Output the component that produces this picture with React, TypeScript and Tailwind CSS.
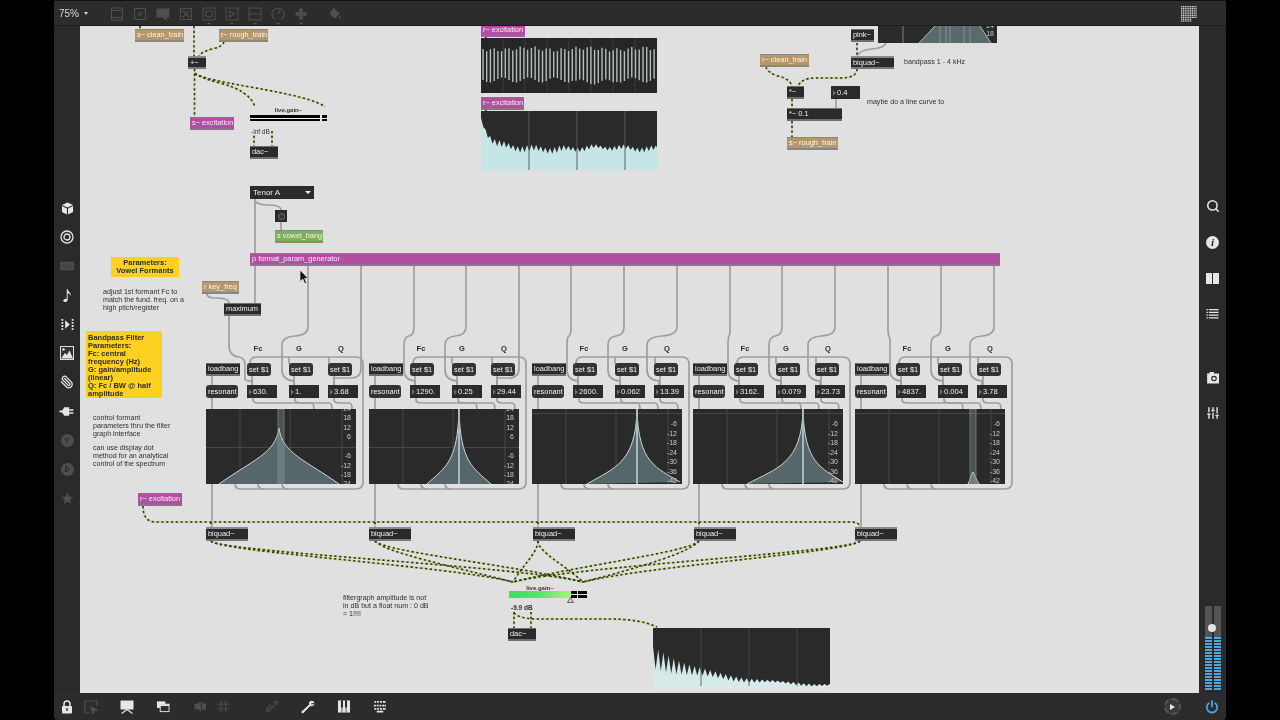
import { Paperclip, Search, SlidersVertical } from 'lucide-react'

const font = "font-['Liberation_Sans',Arial,sans-serif]"

// everything on the patcher is noted in page coordinates, the canvas starts at 80,26
function at(x: number, y: number, w?: number, h?: number) {
  return { left: x - 80, top: y - 26, width: w, height: h }
}

type Kind = 'obj' | 'tan' | 'mag' | 'grn' | 'msg' | 'sig'

const boxClass: Record<Kind, string> = {
  obj: 'bg-[#2a2a2a] border-t border-b-2 border-[#6f6f6f] text-[#f2f2f2]',
  sig: 'bg-[#2a2a2a] border-t-2 border-b-2 border-t-[#8a8a8a] border-b-[#787878] text-[#f2f2f2]',
  tan: 'bg-[#b8966b] border-t border-b-2 border-[#8e8678] text-[#fff6e6]',
  mag: 'bg-[#b24fa2] border-t border-b-2 border-[#8f6d8b] text-[#fdeafa]',
  grn: 'bg-[#7fae5c] border-t border-b-2 border-[#7f9270] text-[#eef7e6]',
  msg: 'bg-[#333333] rounded-[3px] text-[#f2f2f2]',
}

function Box({ x, y, w, h = 13, label, kind = 'obj' }: { x: number; y: number; w: number; h?: number; label: string; kind?: Kind }) {
  return (
    <div style={at(x, y, w, h)} className={'absolute flex items-center whitespace-nowrap pl-[2px] text-[7.4px] leading-none ' + boxClass[kind]}>
      {label}
    </div>
  )
}

function Num({ x, y, value, w = 30 }: { x: number; y: number; value: string; w?: number }) {
  return (
    <div style={at(x, y, w, 13)} className="absolute flex items-center gap-[1px] bg-[#2b2b2b] pl-[2px] text-[7.6px] leading-none text-[#eeeeee]">
      <span className="h-0 w-0 border-y-[3px] border-l-[3px] border-y-transparent border-l-[#6d6d6d]" />
      {value}
    </div>
  )
}

function Note({ x, y, w, lines, bold }: { x: number; y: number; w: number; lines: string[]; bold?: boolean }) {
  return (
    <div style={at(x, y, w)} className={'absolute whitespace-nowrap text-[7.1px] leading-[8px] text-[#2f2f2f] ' + (bold ? 'font-bold' : '')}>
      {lines.map(function(l, i) {
        return <div key={i} className="h-[8px]">{l}</div>
      })}
    </div>
  )
}

const posScale: [string, number][] = [['24', 2], ['18', 11], ['12', 20.5], ['6', 30], ['-6', 49], ['-12', 58.5], ['-18', 68], ['-24', 76.5]]
const negScale: [string, number][] = [['-6', 17], ['-12', 26.5], ['-18', 36], ['-24', 45.5], ['-30', 55], ['-36', 64.5], ['-42', 74]]

type Group = {
  g: number
  vals: string[]
  p: number
  py: number
  l: number
  r: number
  spike: boolean
  pos: boolean
  band?: [number, number]
}

const groups: Group[] = [
  { g: 206, vals: ['630.', '1.', '3.68'], p: 73, py: 19, l: 13, r: 133, spike: false, pos: true, band: [72, 78] },
  { g: 369, vals: ['1290.', '0.25', '29.44'], p: 90, py: 1, l: 58, r: 122, spike: true, pos: true },
  { g: 532, vals: ['2600.', '0.062', '13.39'], p: 105, py: 1, l: 55, r: 148, spike: true, pos: false },
  { g: 693, vals: ['3162.', '0.079', '23.73'], p: 110, py: 1, l: 54, r: 150, spike: true, pos: false },
  { g: 855, vals: ['4837.', '0.004', '3.78'], p: 118, py: 63, l: 113, r: 124, spike: false, pos: false, band: [115, 121] },
]

function curve(g: Group) {
  const a = g.spike ? 0.22 : 0.42
  const b = g.spike ? 0.72 : 0.45
  const d = 75 - g.py
  const inn = g.spike ? 1.5 : 3
  const endY = g.r > 145 ? 73 : 75
  return (
    `M${g.l} 75 C${g.l + (g.p - g.l) * 0.55} ${75 - d * a} ${g.p - inn} ${g.py + d * b} ${g.p} ${g.py} ` +
    `C${g.p + inn} ${g.py + d * b} ${g.r - (g.r - g.p) * 0.55} ${75 - d * a} ${g.r} ${endY}`
  )
}

function FilterGraph({ group }: { group: Group }) {
  const scale = group.pos ? posScale : negScale
  const d = curve(group)
  return (
    <svg style={at(group.g, 409, 150, 75)} viewBox="0 0 150 75" className="absolute bg-[#2a2a2a]">
      <g stroke="#464646" strokeWidth="1">
        <path d="M34 0V75M84 0V75M136 0V75" />
        <path d={group.pos ? 'M0 38.5H150' : 'M0 4.5H150'} />
      </g>
      <path d={d + ' Z'} fill="#57666a" />
      <path d={d} fill="none" stroke="#ccd8d6" strokeWidth="1" />
      {group.band ? (
        <rect x={group.band[0]} y="0" width={group.band[1] - group.band[0]} height="75" fill="#9db0b0" fillOpacity="0.3" stroke="#7e8c8c" strokeWidth="0.7" />
      ) : (
        <rect x={group.p - 1} y="0" width="2" height="75" fill="#a6bbbb" />
      )}
      {scale.map(function(s) {
        return (
          <text key={s[0]} x="145" y={s[1]} textAnchor="end" fontSize="7" fill="#c9c9c9">{s[0]}</text>
        )
      })}
    </svg>
  )
}

function Waveform() {
  let d = ''
  for (let i = 0; i < 47; i++) {
    const x = 2 + i * 3.72
    const top = 11 + 1.8 * Math.sin(i * 1.7) + Math.sin(i * 0.4)
    const bot = 42 + 2.5 * Math.sin(i * 0.9) + (i > 24 && i < 36 ? 2 : 0)
    d += `M${x.toFixed(1)} ${top.toFixed(1)}V${bot.toFixed(1)}`
  }
  return (
    <svg style={at(481, 38, 176, 55)} viewBox="0 0 176 55" className="absolute bg-[#262626]">
      <path d="M22 0V55M44 0V55M66 0V55M88 0V55M110 0V55M132 0V55M154 0V55" stroke="#3c3c3c" strokeWidth="1" />
      <path d={d} stroke="#b2c0bd" strokeWidth="1.4" fill="none" />
    </svg>
  )
}

function spectrum(w: number, h: number, period: number, top: (x: number) => number, depth: (x: number) => number) {
  let d = `M0 ${h}L0 ${top(0).toFixed(1)}`
  for (let x = 0; x < w; x += period) {
    const j = Math.sin(x * 1.3) * 1.2
    d += `L${(x + period * 0.5).toFixed(1)} ${(top(x) + depth(x) + j).toFixed(1)}L${(x + period).toFixed(1)} ${(top(x + period) + j * 0.5).toFixed(1)}`
  }
  return d + `L${w} ${h}Z`
}

function SpectrumTop() {
  const d = spectrum(176, 59, 4.6, function(x) { return 35 - 28 * Math.exp(-x / 10) + 1.5 * Math.sin(x * 0.21) }, function(x) { return 4 + 5 * Math.exp(-x / 50) })
  return (
    <svg style={at(481, 111, 176, 59)} viewBox="0 0 176 59" className="absolute bg-[#2a2a2a]">
      <path d={d} fill="#c6e5e6" />
      <path d="M48 0V59M96 0V59M144 0V59" stroke="#5b5f5f" strokeWidth="1" />
    </svg>
  )
}

function SpectrumBottom() {
  const d = spectrum(177, 62, 5.2, function(x) { return 58 - 40 * Math.exp(-x / 60) }, function(x) { return 22 * Math.exp(-x / 45) + 1.5 })
  return (
    <svg style={at(653, 628, 177, 62)} viewBox="0 0 177 62" className="absolute">
      <defs>
        <linearGradient id="tail" x1="0" y1="0" x2="0" y2="1">
          <stop offset="0.3" stopColor="#cde4e5" />
          <stop offset="0.85" stopColor="#d6ebeb" />
          <stop offset="1" stopColor="#e0e4e4" />
        </linearGradient>
      </defs>
      <rect width="177" height="58.5" fill="#2a2a2a" />
      <path d={d} fill="url(#tail)" />
      <path d="M48 0V58M96 0V58M144 0V58" stroke="#4d4d4d" strokeWidth="0.8" />
    </svg>
  )
}

function cornerGraph() {
  return (
    <svg style={at(878, 26, 119, 17)} viewBox="0 0 119 17" className="absolute bg-[#2a2a2a]">
      <path d="M41 17L57 0H102L113 17Z" fill="#5a6a6a" />
      <path d="M41 17L57 0M102 0L113 17" stroke="#ccd8d6" strokeWidth="0.8" fill="none" />
      <path d="M25 0V17M62 0V17M68 0V17M72 0V17M86 0V17M92 0V17" stroke="#8b9a9a" strokeWidth="0.8" />
      <text x="116" y="10" textAnchor="end" fontSize="7" fill="#c9c9c9">18</text>
      <text x="116" y="2" textAnchor="end" fontSize="7" fill="#c9c9c9">24</text>
    </svg>
  )
}

function route(s: number, v: number, end: number) {
  return `M${s} 266V327Q${s} 335 ${(s + v) / 2} 336Q${v} 337 ${v} 345V370Q${v} 380 ${end} 381V385`
}

function groupCords(g: number, i: number) {
  const list: string[] = []
  // outlets of the poly subpatcher
  const src = [[255, 308, 361], [414, 466, 519], [571, 624, 677], [730, 782, 835], [888, 941, 994]][i]
  if (i === 0) {
    list.push('M229 316V345Q229 356 239 357Q245 358 245 365V379Q245 381 252 381V385')
  } else {
    list.push(route(src[0], g + 35, g + 46))
  }
  list.push(route(src[1], g + 76, g + 88))
  if (i < 2) {
    list.push(`M${src[2]} 266V368Q${src[2]} 378 ${src[2] - 10} 378H${g + 128}V385`)
  } else {
    list.push(route(src[2], g + 115, g + 127))
  }
  // filtergraph back up to the set messages
  const right = g + 157
  list.push(`M${g + 29} 484Q${g + 29} 489 ${g + 35} 489H${right - 7}Q${right} 489 ${right} 482V364Q${right} 357 ${right - 7} 357H${g + 50}Q${g + 44} 357 ${g + 44} 364`)
  list.push(`M${g + 52} 484Q${g + 52} 489 ${g + 58} 489`)
  list.push(`M${g + 76} 484Q${g + 76} 489 ${g + 82} 489`)
  list.push(`M${g + 83} 357V364M${g + 123} 357V364`)
  // set -> number, number -> filtergraph
  list.push(`M${g + 46} 376V385M${g + 88} 376V385M${g + 128} 376V385`)
  list.push(`M${g + 47} 398V400Q${g + 47} 403 ${g + 53} 403H${g + 105}Q${g + 108} 403 ${g + 108} 409`)
  list.push(`M${g + 89} 398V400Q${g + 89} 403 ${g + 95} 403H${g + 123}Q${g + 126} 403 ${g + 126} 409`)
  list.push(`M${g + 128} 398V400Q${g + 128} 403 ${g + 134} 403H${g + 143}Q${g + 146} 403 ${g + 146} 409`)
  // loadbang chain and on to biquad
  list.push(`M${g + 6} 376V409M${g + 6} 484V527`)
  return list
}

const grayCords = [
  'M255 199V253',
  'M255 201Q258 205 268 205Q281 205 281 210',
  'M281 222V230',
  'M255 266V303',
  'M207 294Q207 298 215 298Q229 298 229 303',
  'M836 99V108',
  'M857 56Q860 50 872 49Q884 48 886 43',
]

const bq = [211, 375, 538, 699, 860]

const signalCords = [
  'M140 26V29',
  'M194 26V56',
  'M224 42Q222 47 212 49Q201 52 199 56',
  'M194.5 69V117',
  'M195 73Q200 78 220 83Q250 91 255 107',
  'M195 74Q205 79 250 87Q315 98 325 107',
  'M254 131V146M272 131V146',
  'M486 36V38M486 110V112',
  'M766 67Q768 73 778 76Q790 79 792 86',
  'M857 69Q857 78 840 78H815Q802 78 798 86',
  'M857 43V56',
  'M792 99V108M792 121V137',
  'M143 506Q143 522 156 522H850Q860 522 860 527',
  'M211 522V527M375 522V527M538 522V527M699 522V527',
  'M514 612V628M531 612V628',
  'M514 613Q518 618 535 619H610Q640 619 657 627',
]

for (const x of bq) {
  for (const t of [513, 583]) {
    const far = Math.abs(t - x) > 100
    if (far) {
      const dir = t > x ? 1 : -1
      signalCords.push(`M${x} 541C${x + dir * 9} 552 ${t - dir * 63} 566 ${t} 582`)
    } else {
      signalCords.push(`M${x} 541C${x} 552 ${t + (x - t) * 0.4} 565 ${t} 582`)
    }
  }
}

function Cords() {
  const gray = grayCords.concat(groups.flatMap(function(g, i) { return groupCords(g.g, i) }))
  return (
    <svg viewBox="80 26 1119 667" className="absolute left-0 top-0 h-[667px] w-[1119px]" fill="none">
      {gray.map(function(d, i) {
        return <path key={i} d={d} stroke="#9e9e9e" strokeWidth="1.7" />
      })}
      {signalCords.map(function(d, i) {
        return <path key={'h' + i} d={d} stroke="#cbd9a0" strokeWidth="1.9" />
      })}
      {signalCords.map(function(d, i) {
        return <path key={'s' + i} d={d} stroke="#2d3616" strokeWidth="1.6" strokeDasharray="2.2 2.6" />
      })}
    </svg>
  )
}

function Patcher() {
  return (
    <div className="relative h-[667px] w-[1119px] overflow-hidden bg-[#e0e0e0]">
      <Cords />

      <Box x={135} y={29} w={49} label="s~ clean_train" kind="tan" />
      <Box x={219} y={29} w={49} label="r~ rough_train" kind="tan" />
      <Box x={188} y={56} w={18} label="+~" kind="sig" />
      <Box x={190} y={117} w={44} label="s~ excitation" kind="mag" />

      <div style={at(250, 107, 77)} className="absolute text-center text-[6px] font-bold leading-[6px] text-[#333]">live.gain~</div>
      <div style={at(250, 115, 77, 6)} className="absolute flex flex-col justify-center bg-black">
        <div className="h-px bg-[#eeeeee]" />
      </div>
      <div style={at(320, 115, 2, 6)} className="absolute bg-[#e8e8e8]" />
      <div style={at(251, 128)} className="absolute bg-[#e0e0e0] text-[6.5px] leading-[7px] text-[#333]">-inf dB</div>
      <Box x={250} y={146} w={28} label="dac~" />

      <div style={at(250, 186, 64, 13)} className="absolute flex items-center justify-between bg-[#2c2c2c] px-[3px] text-[8px] text-[#eeeeee]">
        Tenor A
        <span className="h-0 w-0 border-x-[3px] border-t-[3px] border-x-transparent border-t-[#eeeeee]" />
      </div>
      <div style={at(275, 210, 12, 12)} className="absolute flex items-center justify-center bg-[#2b2b2b]">
        <div className="h-[7px] w-[7px] rounded-full border border-[#777] bg-[#333]" />
      </div>
      <Box x={275} y={230} w={48} label="s vowel_bang" kind="grn" />
      <div style={at(250, 253, 750, 13)} className="absolute flex items-center border-t border-b-2 border-[#9a6d94] bg-[#b24fa2] pl-[2px] text-[7.4px] leading-none text-[#fdeafa]">
        p format_param_generator
      </div>
      <Box x={202} y={281} w={37} label="r key_freq" kind="tan" />
      <Box x={224} y={303} w={37} h={13} label="maximum" />

      <div style={at(111, 257, 68, 20)} className="absolute bg-[#fdd021] pt-[2px] text-center text-[7.5px] font-bold leading-[8px] text-[#2c2c2c]">
        Parameters:<br />Vowel Formants
      </div>
      <Note x={103} y={288} w={90} lines={['adjust 1st formant Fc to', 'match the fund. freq. on a', 'high pitch/register']} />
      <div style={at(86, 331, 76, 67)} className="absolute bg-[#fdd021] pl-[2px] pt-[3px] text-[7.5px] font-bold leading-[8px] text-[#2c2c2c]">
        Bandpass Filter<br />Parameters:<br />Fc: central<br />frequency (Hz)<br />G: gain/amplitude<br />(linear)<br />Q: Fc / BW @ half<br />amplitude
      </div>
      <Note x={93} y={414} w={90} lines={['control formant', 'parameters thru the filter', 'graph interface']} />
      <Note x={93} y={444} w={90} lines={['can use display dot', 'method for an analytical', 'control of the spectrum']} />
      <Box x={138} y={493} w={44} label="r~ excitation" kind="mag" />

      <Box x={481} y={24} w={44} label="r~ excitation" kind="mag" />
      <Waveform />
      <Box x={481} y={97} w={43} label="r~ excitation" kind="mag" />
      <SpectrumTop />

      <Box x={851} y={29} w={23} label="pink~" />
      {cornerGraph()}
      <Box x={851} y={56} w={43} label="biquad~" kind="sig" />
      <Note x={904} y={58} w={80} lines={['bandpass 1 - 4 kHz']} />
      <Box x={760} y={54} w={49} label="r~ clean_train" kind="tan" />
      <Box x={787} y={86} w={17} label="*~" />
      <Num x={831} y={86} w={29} value="0.4" />
      <Box x={787} y={108} w={55} label="*~ 0.1" />
      <Note x={867} y={98} w={90} lines={['maybe do a line curve to']} />
      <Box x={787} y={137} w={51} label="s~ rough_train" kind="tan" />

      {groups.map(function(item) {
        const g = item.g
        return (
          <div key={g}>
            <div style={at(g + 42, 345, 20)} className="absolute text-center text-[7.5px] font-bold leading-[8px] text-[#2c2c2c]">Fc</div>
            <div style={at(g + 83, 345, 20)} className="absolute text-center text-[7.5px] font-bold leading-[8px] text-[#2c2c2c]">G</div>
            <div style={at(g + 125, 345, 20)} className="absolute text-center text-[7.5px] font-bold leading-[8px] text-[#2c2c2c]">Q</div>
            <Box x={g} y={363} w={34} label="loadbang" />
            <Box x={g + 41} y={363} w={24} label="set $1" kind="msg" />
            <Box x={g + 83} y={363} w={24} label="set $1" kind="msg" />
            <Box x={g + 122} y={363} w={24} label="set $1" kind="msg" />
            <Box x={g} y={385} w={32} label="resonant" kind="msg" />
            <Num x={g + 41} y={385} value={item.vals[0]} />
            <Num x={g + 83} y={385} value={item.vals[1]} />
            <Num x={g + 122} y={385} value={item.vals[2]} />
            <FilterGraph group={item} />
          </div>
        )
      })}

      {bq.map(function(x, i) {
        return <Box key={x} x={[206, 369, 533, 694, 855][i]} y={527} w={42} h={14} label="biquad~" kind="sig" />
      })}

      <div style={at(509, 585, 62)} className="absolute text-center text-[6px] font-bold leading-[6px] text-[#333]">live.gain~</div>
      <div style={at(509, 591, 62, 7)} className="absolute bg-gradient-to-r from-[#39df5c] via-[#55e766] to-[#a8ef84]" />
      <div style={at(571, 591, 16, 7)} className="absolute flex flex-col justify-center bg-black">
        <div className="h-px bg-[#dddddd]" />
      </div>
      <div style={at(577, 591, 1, 7)} className="absolute bg-[#dddddd]" />
      <svg style={at(567, 597, 7, 6)} viewBox="0 0 7 6" className="absolute">
        <path d="M3.5 0.5L6.5 5.5H0.5Z" fill="#d8d8d8" stroke="#444" strokeWidth="0.8" />
      </svg>
      <div style={at(511, 604)} className="absolute bg-[#e0e0e0] text-[6.5px] font-bold leading-[7px] text-[#333]">-9.9 dB</div>
      <Note x={343} y={594} w={90} lines={['filtergraph amplitude is not', 'in dB but a float num : 0 dB', '= 1!!!!']} />
      <Box x={508} y={628} w={28} label="dac~" />
      <SpectrumBottom />

      <svg style={at(299, 269, 10, 16)} viewBox="0 0 10 16" className="absolute">
        <path d="M1 1V12.5L3.8 10L5.8 14.6L7.6 13.8L5.6 9.4H9.2Z" fill="#111" stroke="#e8e8e8" strokeWidth="0.7" />
      </svg>
    </div>
  )
}

const dim = '#4e4e4e'

function Caret() {
  return <span className="mt-[2px] h-0 w-0 border-x-[2.5px] border-t-[2.5px] border-x-transparent border-t-[#5a5a5a]" />
}

function TopTool({ d, fill, caret }: { d: string; fill?: boolean; caret?: boolean }) {
  return (
    <div className="flex h-[26px] w-[23px] flex-col items-center justify-start pt-[6px]">
      <svg viewBox="0 0 14 14" className="h-[14px] w-[14px]" fill={fill ? dim : 'none'} stroke={dim} strokeWidth="1.1">
        <path d={d} />
      </svg>
      {caret ? <Caret /> : null}
    </div>
  )
}

function TopBar() {
  return (
    <div className="flex h-[26px] items-start border-t border-b border-t-[#111] border-b-[#191919] bg-[#2c2c2c]">
      <div className="flex h-[24px] w-[40px] items-center gap-[5px] pl-[5px] text-[10px] font-medium text-[#d9d9d9]">
        75%
        <span className="h-0 w-0 border-x-[2.5px] border-t-[3px] border-x-transparent border-t-[#d0d0d0]" />
      </div>
      <div className="ml-[11px] flex">
        <TopTool d="M1.5 1H12.5V13H1.5ZM1.5 3.5H12.5M1.5 10.5H12.5" />
        <TopTool d="M1.5 1.5H12.5V12.5H1.5ZM5 9L7 5M7 9L9 5" />
        <TopTool d="M1 2H13V10H9.5L10.5 13L6.5 10H1Z" fill />
        <TopTool d="M1.5 1.5H12.5V12.5H1.5ZM3.5 3.5L10.5 10.5M10.5 3.5L3.5 10.5" />
        <TopTool d="M1 1H13V13H1ZM7 3.7A3.3 3.3 0 1 0 7 10.3A3.3 3.3 0 1 0 7 3.7Z" caret />
        <TopTool d="M1 1H13V13H1ZM4.5 4L9.5 7L4.5 10Z" caret />
        <TopTool d="M1 1H13V13H1ZM1 7H13" caret />
        <TopTool d="M4 12.5A6 6 0 1 1 10 12.5M7 7L9.5 2.5" caret />
        <TopTool d="M5.8 2H8.2V5.8H12V8.2H8.2V12H5.8V8.2H2V5.8H5.8Z" fill caret />
      </div>
      <svg viewBox="0 0 16 16" className="ml-[16px] mt-[5px] h-[15px] w-[15px]" fill={dim}>
        <path d="M6.5 1.5L7.5 3.5L13 8L7.5 13.5L1.5 8ZM12.5 10.5Q15 13 13.5 14Q11.5 14 12.5 10.5Z" />
      </svg>
      <Matrix />
    </div>
  )
}

function Matrix() {
  const dots = []
  for (let r = 0; r < 9; r++) {
    for (let c = 0; c < 9; c++) {
      if (r > 6 && c > 5) continue
      dots.push(<rect key={r + '-' + c} x={c * 1.8} y={r * 1.8} width="1.2" height="1.2" fill={r < 2 && c > 6 ? '#d6d88a' : '#d8d8d8'} />)
    }
  }
  return (
    <svg viewBox="0 0 16 16" className="ml-auto mr-[29px] mt-[5px] h-[16px] w-[16px]">{dots}</svg>
  )
}

function SideSlot({ children }: { children: React.ReactNode }) {
  return <div className="flex h-[29px] w-[26px] items-center justify-center">{children}</div>
}

function LeftBar() {
  const w = '#e6e6e6'
  return (
    <div className="flex h-[667px] w-[26px] flex-col bg-[#2a2a2a] pt-[167.5px]">
      <SideSlot>
        <svg viewBox="0 0 14 14" className="h-[13px] w-[13px]" fill={w}>
          <path d="M7 0.5L13 3.2L7 6L1 3.2ZM1 4.4L6.4 6.9V13.5L1 10.8ZM13 4.4L7.6 6.9V13.5L13 10.8Z" />
        </svg>
      </SideSlot>
      <SideSlot>
        <svg viewBox="0 0 14 14" className="h-[14px] w-[14px]" fill="none" stroke={w} strokeWidth="1.3">
          <circle cx="7" cy="7" r="6" />
          <circle cx="7" cy="7" r="3" />
        </svg>
      </SideSlot>
      <SideSlot>
        <svg viewBox="0 0 14 14" className="h-[14px] w-[14px]" fill="none" stroke={dim} strokeWidth="1.6">
          <path d="M1 3.5H13V10.5H1Z" fill="#444" />
        </svg>
      </SideSlot>
      <SideSlot>
        <svg viewBox="0 0 14 16" className="h-[15px] w-[13px]" fill={w}>
          <path d="M6.2 1H7.2C7.5 4 11 4.5 10.8 9C10.2 6.5 8.8 6 7.2 5.6V12.5C7.2 14.2 5.6 15 4.3 15C3 15 2.3 14.2 2.5 13.2C2.8 12 4.6 11 6.2 11.5Z" />
        </svg>
      </SideSlot>
      <SideSlot>
        <svg viewBox="0 0 14 14" className="h-[13px] w-[13px]" fill={w}>
          <path d="M4.5 2.5L9.5 7L4.5 11.5Z" />
          <path d="M0.5 1H2.5V3H0.5ZM0.5 4.3H2.5V6.3H0.5ZM0.5 7.6H2.5V9.6H0.5ZM0.5 11H2.5V13H0.5ZM11.5 1H13.5V3H11.5ZM11.5 4.3H13.5V6.3H11.5ZM11.5 7.6H13.5V9.6H11.5ZM11.5 11H13.5V13H11.5Z" />
        </svg>
      </SideSlot>
      <SideSlot>
        <svg viewBox="0 0 14 14" className="h-[14px] w-[14px]">
          <rect x="0.5" y="0.5" width="13" height="13" fill="#333" stroke="#ddd" />
          <circle cx="3.5" cy="3.5" r="1.2" fill="#eee" />
          <path d="M1 12.5L5 7L7 9L9.5 4.5L13 12.5Z" fill="#e6e6e6" />
        </svg>
      </SideSlot>
      <SideSlot>
        <Paperclip size={14} color={w} strokeWidth={2.2} className="-scale-x-100" />
      </SideSlot>
      <SideSlot>
        <svg viewBox="0 0 15 14" className="h-[15px] w-[16px]" fill={w}>
          <path d="M0.5 6H3L5 3H9.5V5H13.5V6.2H9.5V7.8H13.5V9H9.5V11H5L3 8H0.5Z" />
        </svg>
      </SideSlot>
      <SideSlot>
        <span className="flex h-[13px] w-[13px] items-center justify-center rounded-full bg-[#4e4e4e] font-['Liberation_Serif',serif] text-[10px] font-bold italic leading-none text-[#2a2a2a]">v</span>
      </SideSlot>
      <SideSlot>
        <span className="flex h-[13px] w-[13px] items-center justify-center rounded-full bg-[#4e4e4e] font-['Liberation_Serif',serif] text-[10px] font-bold italic leading-none text-[#2a2a2a]">b</span>
      </SideSlot>
      <SideSlot>
        <svg viewBox="0 0 14 14" className="h-[13px] w-[13px]" fill={dim}>
          <path d="M7 0.5L8.9 4.9L13.5 5.3L10 8.4L11 13L7 10.6L3 13L4 8.4L0.5 5.3L5.1 4.9Z" />
        </svg>
      </SideSlot>
    </div>
  )
}

function RightSlot({ children, mt }: { children: React.ReactNode; mt?: boolean }) {
  return <div className={'flex h-[36px] w-[27px] items-center justify-center ' + (mt ? 'mt-[27px]' : '')}>{children}</div>
}

function RightBar() {
  const w = '#e6e6e6'
  const segs = []
  for (let i = 0; i < 18; i++) {
    segs.push(<div key={i} className="h-[2px] w-full bg-[#4fa6dc]" />)
  }
  return (
    <div className="flex h-[667px] w-[27px] flex-col bg-[#2a2a2a] pt-[162px]">
      <RightSlot><Search size={14} color={w} strokeWidth={2.6} /></RightSlot>
      <RightSlot>
        <span className="flex h-[13px] w-[13px] items-center justify-center rounded-full bg-[#e6e6e6] font-['Liberation_Serif',serif] text-[11px] font-bold italic leading-none text-[#2a2a2a]">i</span>
      </RightSlot>
      <RightSlot>
        <div className="flex h-[11px] w-[13px] gap-[1px]">
          <div className="flex-1 bg-[#e6e6e6]" />
          <div className="flex-1 bg-[#e6e6e6]" />
        </div>
      </RightSlot>
      <RightSlot>
        <svg viewBox="0 0 14 13" className="h-[12px] w-[13px]" fill={w}>
          <path d="M0.5 1H2V2.5H0.5ZM3 1H13.5V2.5H3ZM0.5 4H2V5.5H0.5ZM3 4H13.5V5.5H3ZM0.5 7H2V8.5H0.5ZM3 7H13.5V8.5H3ZM0.5 10H2V11.5H0.5ZM3 10H13.5V11.5H3Z" />
        </svg>
      </RightSlot>
      <RightSlot mt>
        <svg viewBox="0 0 14 13" className="h-[13px] w-[14px]">
          <path d="M1 2.5H3.5V1H8V2.5H13V12.5H1Z" fill={w} />
          <circle cx="8" cy="7.5" r="2.8" fill="#2a2a2a" />
          <circle cx="8" cy="7.5" r="1.6" fill={w} />
          <path d="M1 4V11" stroke="#555" strokeWidth="0.8" strokeDasharray="1 1" />
        </svg>
      </RightSlot>
      <RightSlot><SlidersVertical size={14} color={w} strokeWidth={2.4} /></RightSlot>
      <div className="relative mt-[175px] flex h-[85px] justify-center gap-[2px] pl-[1px]">
        <div className="flex w-[7px] flex-col">
          <div className="h-[31px] bg-[#555]" />
          <div className="flex flex-1 flex-col justify-between pb-px">{segs}</div>
        </div>
        <div className="flex w-[7px] flex-col">
          <div className="h-[31px] bg-[#555]" />
          <div className="flex flex-1 flex-col justify-between pb-px">{segs}</div>
        </div>
        <div className="absolute left-[9px] top-[18px] h-[8px] w-[8px] rounded-full bg-[#e4e4e4]" />
      </div>
    </div>
  )
}

function BottomSlot({ className, children }: { className?: string; children: React.ReactNode }) {
  return <div className={'flex h-[27px] w-[24px] items-center justify-center ' + (className || '')}>{children}</div>
}

function BottomBar() {
  const w = '#e6e6e6'
  return (
    <div className="flex h-[27px] items-center rounded-b-[3px] bg-[#2c2c2c] pl-px pr-[2px]">
      <BottomSlot>
        <svg viewBox="0 0 12 14" className="h-[14px] w-[12px]">
          <path d="M3 6V4A3 3 0 0 1 9 4V6" fill="none" stroke={w} strokeWidth="1.5" />
          <rect x="1" y="6" width="10" height="7.5" rx="1" fill={w} />
          <rect x="5.3" y="8" width="1.4" height="3" fill="#2c2c2c" />
        </svg>
      </BottomSlot>
      <BottomSlot>
        <svg viewBox="0 0 14 14" className="h-[14px] w-[14px]" fill="none" stroke="#4f4f4f" strokeWidth="1.2">
          <path d="M13 6V1H1V13H6" />
          <path d="M7 7L13 10L10 11L9 14Z" fill="#4f4f4f" />
        </svg>
      </BottomSlot>
      <BottomSlot className="ml-[12px]">
        <svg viewBox="0 0 14 14" className="h-[14px] w-[14px]" fill={w}>
          <path d="M0.5 0.5H13.5V9.5H0.5Z" />
          <path d="M7 9.5L1.5 13.5M7 9.5L12.5 13.5" stroke={w} strokeWidth="1.2" />
        </svg>
      </BottomSlot>
      <BottomSlot className="ml-[12px]">
        <svg viewBox="0 0 14 14" className="h-[13px] w-[14px]">
          <rect x="0.5" y="1.5" width="9" height="7" fill={w} />
          <rect x="4" y="4.5" width="9.5" height="8" fill="#2c2c2c" stroke={w} />
          <rect x="4" y="4.5" width="9.5" height="2" fill={w} />
        </svg>
      </BottomSlot>
      <BottomSlot className="ml-[13px]">
        <svg viewBox="0 0 14 14" className="h-[13px] w-[13px]" fill="#4f4f4f">
          <path d="M0.5 4H4L7.5 1.5V12.5L4 10H0.5ZM8.5 3L13 4V10L8.5 11Z" />
        </svg>
      </BottomSlot>
      <BottomSlot className="-ml-px">
        <svg viewBox="0 0 14 14" className="h-[13px] w-[13px]" fill="none" stroke="#4f4f4f" strokeWidth="1">
          <path d="M4.5 0.5V13.5M9.5 0.5V13.5M0.5 4.5H13.5M0.5 9.5H13.5" />
        </svg>
      </BottomSlot>
      <BottomSlot className="ml-[25px]">
        <svg viewBox="0 0 14 14" className="h-[14px] w-[14px]" fill="none" stroke="#4a4a4a" strokeWidth="1.6">
          <path d="M9 5.5L4 10.5Q2.5 12 1.8 10.5Q1.2 9.5 2.5 8L6 4.5M10.5 0.5V5M8.5 2.5H13" />
        </svg>
      </BottomSlot>
      <BottomSlot className="ml-[12px]">
        <svg viewBox="0 0 14 14" className="h-[14px] w-[14px]" fill={w}>
          <path d="M13.4 2.5C13 0.8 10.6 0 9 1.2C8 2 7.8 3.5 8.2 4.5L0.8 11.2C0 12 0.6 13.6 2.2 13.2L9.3 6C11 6.6 13.6 5.6 13.5 3.2L11 4.8L9.8 3.8Z" />
        </svg>
      </BottomSlot>
      <BottomSlot className="ml-[12px]">
        <svg viewBox="0 0 14 14" className="h-[13px] w-[14px]">
          <rect x="0.5" y="0.5" width="13" height="13" fill={w} />
          <path d="M4.8 0.5V13.5M9.2 0.5V13.5" stroke="#2c2c2c" strokeWidth="0.8" />
          <path d="M3.7 0.5H5.9V8H3.7ZM8.1 0.5H10.3V8H8.1Z" fill="#2c2c2c" />
        </svg>
      </BottomSlot>
      <BottomSlot className="ml-[12px]">
        <svg viewBox="0 0 14 14" className="h-[13px] w-[14px]" fill={w}>
          <path d="M1 1H3V3H1ZM4 1H6V3H4ZM7 1H9V3H7ZM10 1H13V3H10ZM0.5 5H2.5V7H0.5ZM3.5 5H5.5V7H3.5ZM6.5 5H8.5V7H6.5ZM9.5 5H11.5V7H9.5ZM12 5H13.5V7H12ZM1 8.5H3V10.5H1ZM4 8.5H6V10.5H4ZM7 8.5H9V10.5H7ZM10 8.5H13V10.5H10ZM3.5 11.5H10.5V13.5H3.5Z" />
        </svg>
      </BottomSlot>
      <BottomSlot className="ml-auto">
        <div className="flex h-[17px] w-[17px] items-center justify-center rounded-full border-[2px] border-dashed border-[#555] bg-[#3a3a3a]">
          <span className="ml-px h-0 w-0 border-y-[3px] border-l-[5px] border-y-transparent border-l-[#e6e6e6]" />
        </div>
      </BottomSlot>
      <BottomSlot className="ml-[16px]">
        <svg viewBox="0 0 14 14" className="h-[14px] w-[14px]" fill="none" stroke="#4fa3d8" strokeWidth="1.8" strokeLinecap="round">
          <path d="M7 1V6.5M3.8 3.2A5.2 5.2 0 1 0 10.2 3.2" />
        </svg>
      </BottomSlot>
    </div>
  )
}

export default function App() {
  return (
    <div className={'h-[720px] w-[1280px] overflow-hidden bg-black pl-[54px] blur-[0.35px] ' + font}>
      <div className="w-[1172px]">
        <TopBar />
        <div className="flex">
          <LeftBar />
          <Patcher />
          <RightBar />
        </div>
        <BottomBar />
      </div>
    </div>
  )
}
